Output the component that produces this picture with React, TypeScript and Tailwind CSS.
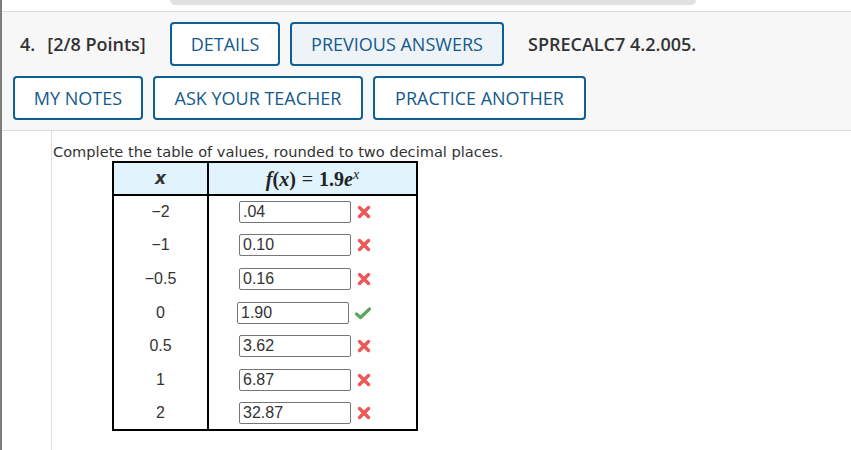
import React from "react";

const rows: { x: string; value: string; ok: boolean }[] = [
  { x: "\u22122", value: ".04", ok: false },
  { x: "\u22121", value: "0.10", ok: false },
  { x: "\u22120.5", value: "0.16", ok: false },
  { x: "0", value: "1.90", ok: true },
  { x: "0.5", value: "3.62", ok: false },
  { x: "1", value: "6.87", ok: false },
  { x: "2", value: "32.87", ok: false },
];

function WrongMark() {
  return (
    <svg width="16" height="16" viewBox="0 0 16 16" className="shrink-0">
      <path
        d="M3.5 3.5 L12.5 12.5 M12.5 3.5 L3.5 12.5"
        stroke="#f05656"
        strokeWidth="3.4"
        strokeLinecap="round"
        fill="none"
      />
    </svg>
  );
}

function RightMark() {
  return (
    <svg width="18" height="16" viewBox="0 0 18 16" className="shrink-0">
      <path
        d="M2.5 9 L6.5 12.5 L15.5 4"
        stroke="#5aa85a"
        strokeWidth="3.2"
        strokeLinecap="round"
        strokeLinejoin="round"
        fill="none"
      />
    </svg>
  );
}

function ActionButton({
  label,
  width,
  tinted,
}: {
  label: string;
  width: string;
  tinted?: boolean;
}) {
  return (
    <button
      type="button"
      className={`${width} h-[44px] rounded-[4px] border-2 border-[#0d5f96] text-[18px] text-[#145a8c] ${
        tinted ? "bg-[#eef3f8]" : "bg-white"
      }`}
    >
      {label}
    </button>
  );
}

export default function App() {
  return (
    <div
      className="flex h-[450px] w-[851px] overflow-hidden bg-white"
      style={{ fontFamily: "'Open Sans', 'Liberation Sans', sans-serif" }}
    >
      <div className="w-[2px] shrink-0 bg-[#7d7d7d]" />
      <div className="flex flex-1 flex-col">
        {/* top strip */}
        <div className="h-[11px] shrink-0">
          <div className="ml-[168px] h-[5px] w-[526px] rounded-b-[10px] bg-[#e1e1e1]" />
        </div>

        {/* question header */}
        <div className="shrink-0 border-y border-[#dcdcdc] bg-[#f7f7f7] px-[11px] pt-[10px] pb-[10px]">
          <div className="flex items-center">
            <div className="ml-[7px] flex w-[150px] items-center text-[18px] font-semibold text-[#333]">
              <span>4.</span>
              <span className="ml-[12px]">[2/8 Points]</span>
            </div>
            <ActionButton label="DETAILS" width="w-[110px]" />
            <div className="ml-[10px]">
              <ActionButton label="PREVIOUS ANSWERS" width="w-[214px]" tinted />
            </div>
            <span className="ml-[24px] text-[18px] font-semibold text-[#333]">
              SPRECALC7 4.2.005.
            </span>
          </div>
          <div className="mt-[10px] flex items-center gap-[10px]">
            <ActionButton label="MY NOTES" width="w-[130px]" />
            <ActionButton label="ASK YOUR TEACHER" width="w-[210px]" />
            <ActionButton label="PRACTICE ANOTHER" width="w-[213px]" />
          </div>
        </div>

        {/* question body */}
        <div className="flex flex-1">
          <div className="w-[50px] shrink-0 border-r border-[#dedede]" />
          <div className="pl-[1px] pt-[11px]">
            <p
              className="text-[14.6px] leading-[19px] text-[#333]"
              style={{ fontFamily: "'DejaVu Sans', Verdana, sans-serif" }}
            >
              Complete the table of values, rounded to two decimal places.
            </p>
            <table className="ml-[59px] border-collapse border-2 border-black">
              <thead>
                <tr className="h-[33px] bg-[#e1f3fd]">
                  <th
                    className="w-[95px] border-2 border-black text-[17px] font-bold italic text-[#333]"
                    style={{ fontFamily: "'DejaVu Sans', Verdana, sans-serif" }}
                  >
                    x
                  </th>
                  <th
                    className="w-[209px] border-2 border-black text-[20px] font-bold text-[#222]"
                    style={{ fontFamily: "'Liberation Serif', 'DejaVu Serif', serif" }}
                  >
                    <i>f</i>(<i>x</i>)
                    <span className="mx-[6px] font-normal">=</span>
                    1.9<i>e</i>
                    <sup className="text-[14px] italic font-normal">x</sup>
                  </th>
                </tr>
              </thead>
              <tbody>
                {rows.map((r) => (
                  <tr key={r.x} className="h-[33.6px]">
                    <td
                      className="border-r-2 border-black text-center text-[16px] text-[#333]"
                      style={{ fontFamily: "'Liberation Sans', Arial, sans-serif" }}
                    >
                      {r.x}
                    </td>
                    <td>
                      <div className={`flex items-center gap-[5px] ${r.ok ? "pl-[28px]" : "pl-[30px]"}`}>
                        <div
                          className="flex h-[22px] w-[112px] items-center rounded-[2px] border border-[#767676] bg-white px-[3px] text-[16px] text-[#333]"
                          style={{ fontFamily: "'Liberation Sans', Arial, sans-serif" }}
                        >
                          {r.value}
                        </div>
                        {r.ok ? <RightMark /> : <WrongMark />}
                      </div>
                    </td>
                  </tr>
                ))}
              </tbody>
            </table>
          </div>
        </div>
      </div>
    </div>
  );
}
